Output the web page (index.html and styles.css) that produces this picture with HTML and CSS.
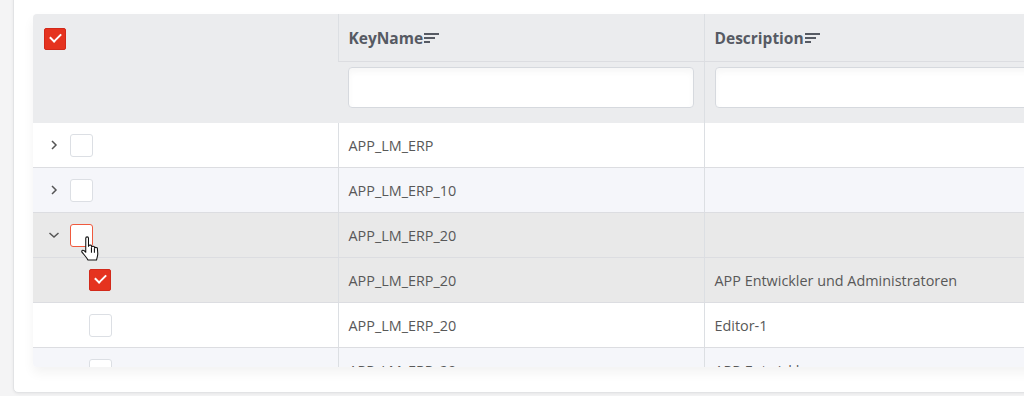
FILE: index.html
```html
<!DOCTYPE html>
<html lang="en">
<head>
    <meta charset="UTF-8">
    <title>Roles</title>
    <link rel="stylesheet" href="styles.css">
</head>
<body>

<div class="card">
    <div class="grid-wrap">
        <table class="grid">
            <colgroup>
                <col class="col-select">
                <col class="col-key">
                <col class="col-desc">
            </colgroup>
            <thead>
                <tr class="head-row">
                    <th rowspan="2" class="select-head">
                        <span class="check checked"></span>
                    </th>
                    <th><span class="head-label">KeyName<span class="sort"><i></i><i></i><i></i></span></span></th>
                    <th><span class="head-label">Description<span class="sort"><i></i><i></i><i></i></span></span></th>
                </tr>
                <tr class="filter-row">
                    <th><input type="text" class="filter"></th>
                    <th><input type="text" class="filter"></th>
                </tr>
            </thead>
            <tbody>
                <tr>
                    <td><div class="sel"><span class="toggle"><svg width="12" height="12" viewBox="0 0 12 12"><path d="M4 2 L8 6 L4 10" fill="none" stroke="#555" stroke-width="1.5"/></svg></span><span class="check"></span></div></td>
                    <td>APP_LM_ERP</td>
                    <td></td>
                </tr>
                <tr class="alt">
                    <td><div class="sel"><span class="toggle"><svg width="12" height="12" viewBox="0 0 12 12"><path d="M4 2 L8 6 L4 10" fill="none" stroke="#555" stroke-width="1.5"/></svg></span><span class="check"></span></div></td>
                    <td>APP_LM_ERP_10</td>
                    <td></td>
                </tr>
                <tr class="active">
                    <td><div class="sel"><span class="toggle"><svg width="12" height="12" viewBox="0 0 12 12"><path d="M1.5 4 L6 8 L10.5 4" fill="none" stroke="#555" stroke-width="1.5"/></svg></span><span class="check hover">
                        <svg class="cursor" width="19" height="26" viewBox="0 0 18 24"><path d="M4.5 1.8 C4.5 0.9 5.1 0.5 5.8 0.5 C6.5 0.5 7.1 0.9 7.1 1.8 L7.1 9.5 L7.3 8.9 C7.6 8.1 9.6 8.1 9.9 8.9 L10.1 10 C10.4 9.2 12.4 9.2 12.7 10 L12.9 11 C13.2 10.3 15.2 10.3 15.5 11.1 L15.9 16.5 C15.9 18.6 15.1 19.8 14.7 22.5 L6.6 22.5 C5.6 20.3 3.6 18.3 1.1 15.2 C0.3 14.2 0.9 12.9 2.1 13.2 C3.1 13.4 3.8 14.3 4.5 15.1 Z M9.9 10.5 L9.9 15.5 M12.7 11.5 L12.7 15.5" fill="#fff" stroke="#111" stroke-width="1" stroke-linejoin="round"/></svg>
                    </span></div></td>
                    <td>APP_LM_ERP_20</td>
                    <td></td>
                </tr>
                <tr class="active">
                    <td><div class="sel child"><span class="check checked"></span></div></td>
                    <td>APP_LM_ERP_20</td>
                    <td>APP Entwickler und Administratoren</td>
                </tr>
                <tr>
                    <td><div class="sel child"><span class="check"></span></div></td>
                    <td>APP_LM_ERP_20</td>
                    <td>Editor-1</td>
                </tr>
                <tr class="alt">
                    <td><div class="sel child"><span class="check"></span></div></td>
                    <td>APP_LM_ERP_20</td>
                    <td>APP Entwickler</td>
                </tr>
            </tbody>
        </table>
    </div>
</div>

</body>
</html>
```

FILE: styles.css
```css
body {
    margin: 0;
    background-color: #f4f4f5;
    font-family: "Open Sans", "Liberation Sans", sans-serif;
    overflow: hidden;
    height: 396px;
}
.card {
    margin: -10px 0 0 13px;
    width: 1100px;
    height: 403px;
    box-sizing: border-box;
    background-color: #fff;
    border: 1px solid #e2e3e5;
    border-radius: 5px;
    box-shadow: 0 1px 3px rgba(0, 0, 0, 0.06);
    padding: 23px 0 0 19px;
}
.grid-wrap {
    height: 353px;
    overflow: hidden;
    border-radius: 4px;
    box-shadow: 0 6px 12px rgba(0, 0, 0, 0.05);
}
.grid {
    border-collapse: collapse;
    table-layout: fixed;
    width: 1080px;
}
.col-select {
    width: 305px;
}
.col-key {
    width: 366px;
}
.grid th, .grid td {
    padding: 0 10px;
    text-align: left;
    border-left: 1px solid #dcdfe3;
    border-bottom: 1px solid #dcdde1;
}
.grid th:first-child, .grid td:first-child {
    border-left: none;
}
.grid thead th {
    background-color: #ebecee;
    color: #565a63;
    font-size: 15.5px;
    font-weight: 700;
}
.head-row th {
    height: 47px;
}
.head-label {
    display: inline-flex;
    align-items: center;
}
.grid th.select-head {
    vertical-align: top;
    padding: 14px 11px;
    border-bottom: none;
}
.filter-row th {
    background-color: #f4f5f8;
    height: 56px;
    vertical-align: top;
    padding-top: 5px;
    border-bottom: none;
}
.filter {
    display: block;
    width: 100%;
    height: 41px;
    box-sizing: border-box;
    border: 1px solid #d6d9de;
    border-radius: 4px;
    background-color: #fff;
    box-shadow: inset 0 4px 6px rgba(0, 0, 0, 0.035);
}
.sort {
    display: inline-flex;
    flex-direction: column;
    gap: 2px;
    margin-left: 1px;
    margin-top: 1px;
}
.sort i {
    display: block;
    height: 2px;
    background-color: #565a63;
    width: 15px;
}
.sort i:nth-child(2) {
    width: 11px;
}
.sort i:nth-child(3) {
    width: 6px;
}
.grid tbody td {
    height: 44px;
    font-size: 14.4px;
    color: #585858;
    background-color: #fff;
}
.grid tbody tr.alt td {
    background-color: #f5f6fa;
}
.grid tbody tr.active td {
    background-color: #e9e9e9;
}
.sel {
    display: flex;
    align-items: center;
    gap: 6px;
    padding-left: 1px;
}
.sel.child {
    padding-left: 46px;
}
.toggle {
    display: flex;
    align-items: center;
    justify-content: center;
    width: 20px;
    height: 20px;
}
.check {
    position: relative;
    display: block;
    width: 23px;
    height: 23px;
    box-sizing: border-box;
    border: 1px solid #dcdfe4;
    border-radius: 3px;
    background-color: #fff;
}
.check.hover {
    border-color: #ef5a3e;
}
.check.checked {
    width: 22px;
    height: 22px;
    border-radius: 2px;
    border-color: #d2291a;
    background-color: #e5331f;
}
.check.checked::after {
    content: "";
    position: absolute;
    left: 5px;
    top: 4px;
    width: 9px;
    height: 5px;
    border-left: 2px solid #fff;
    border-bottom: 2px solid #fff;
    transform: rotate(-45deg);
}
.cursor {
    position: absolute;
    left: 10px;
    top: 11px;
}
```
